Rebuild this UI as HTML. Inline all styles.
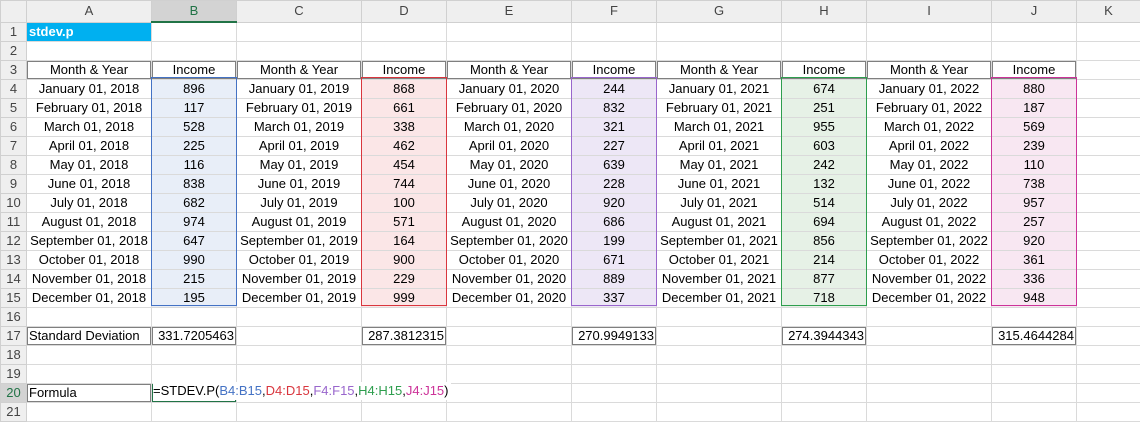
<!DOCTYPE html><html><head><style>
body{margin:0;width:1140px;height:421px;overflow:hidden;background:#fff;font-family:"Liberation Sans",Arial,sans-serif;font-size:13px;color:#000;position:relative}
table{border-collapse:collapse;table-layout:fixed;position:absolute;left:0;top:0;width:1140px}
td{height:18px;padding:0 2px;border:1px solid #dadada;white-space:nowrap;overflow:hidden;text-align:center;line-height:18px}
tr.h td{height:20px;background:#efefef;color:#444;border-color:#d0d0d0;font-size:13px}
td.n{background:#efefef;color:#444;border-color:#d0d0d0;text-align:center;padding:0}
td.t{box-shadow:inset 0 0 0 1px #7f7f7f}
td.l{text-align:left}
td.r{text-align:right}
.b{background:#e8eef8}.d{background:#fbe6e7}.f{background:#ede7f6}.hh{background:#e6f1e6}.j{background:#f8e7f2}
.box{position:absolute;box-sizing:border-box;border:1px solid}
</style></head><body>
<table>
<colgroup><col style="width:26px"><col style="width:125px"><col style="width:85px"><col style="width:125px"><col style="width:85px"><col style="width:125px"><col style="width:85px"><col style="width:125px"><col style="width:85px"><col style="width:125px"><col style="width:85px"><col style="width:64px"></colgroup>
<tr class="h"><td></td><td>A</td><td style="background:#d3d3d3;color:#217346;border-bottom:2px solid #217346">B</td><td>C</td><td>D</td><td>E</td><td>F</td><td>G</td><td>H</td><td>I</td><td>J</td><td>K</td></tr>
<tr><td class="n">1</td><td class="l" style="background:#00b0f0;color:#fff;font-weight:bold">stdev.p</td><td></td><td></td><td></td><td></td><td></td><td></td><td></td><td></td><td></td><td></td></tr>
<tr><td class="n">2</td><td></td><td></td><td></td><td></td><td></td><td></td><td></td><td></td><td></td><td></td><td></td></tr>
<tr><td class="n">3</td><td class="t">Month &amp; Year</td><td class="t">Income</td><td class="t">Month &amp; Year</td><td class="t">Income</td><td class="t">Month &amp; Year</td><td class="t">Income</td><td class="t">Month &amp; Year</td><td class="t">Income</td><td class="t">Month &amp; Year</td><td class="t">Income</td><td></td></tr>
<tr><td class="n">4</td><td>January 01, 2018</td><td class="b">896</td><td>January 01, 2019</td><td class="d">868</td><td>January 01, 2020</td><td class="f">244</td><td>January 01, 2021</td><td class="hh">674</td><td>January 01, 2022</td><td class="j">880</td><td></td></tr>
<tr><td class="n">5</td><td>February 01, 2018</td><td class="b">117</td><td>February 01, 2019</td><td class="d">661</td><td>February 01, 2020</td><td class="f">832</td><td>February 01, 2021</td><td class="hh">251</td><td>February 01, 2022</td><td class="j">187</td><td></td></tr>
<tr><td class="n">6</td><td>March 01, 2018</td><td class="b">528</td><td>March 01, 2019</td><td class="d">338</td><td>March 01, 2020</td><td class="f">321</td><td>March 01, 2021</td><td class="hh">955</td><td>March 01, 2022</td><td class="j">569</td><td></td></tr>
<tr><td class="n">7</td><td>April 01, 2018</td><td class="b">225</td><td>April 01, 2019</td><td class="d">462</td><td>April 01, 2020</td><td class="f">227</td><td>April 01, 2021</td><td class="hh">603</td><td>April 01, 2022</td><td class="j">239</td><td></td></tr>
<tr><td class="n">8</td><td>May 01, 2018</td><td class="b">116</td><td>May 01, 2019</td><td class="d">454</td><td>May 01, 2020</td><td class="f">639</td><td>May 01, 2021</td><td class="hh">242</td><td>May 01, 2022</td><td class="j">110</td><td></td></tr>
<tr><td class="n">9</td><td>June 01, 2018</td><td class="b">838</td><td>June 01, 2019</td><td class="d">744</td><td>June 01, 2020</td><td class="f">228</td><td>June 01, 2021</td><td class="hh">132</td><td>June 01, 2022</td><td class="j">738</td><td></td></tr>
<tr><td class="n">10</td><td>July 01, 2018</td><td class="b">682</td><td>July 01, 2019</td><td class="d">100</td><td>July 01, 2020</td><td class="f">920</td><td>July 01, 2021</td><td class="hh">514</td><td>July 01, 2022</td><td class="j">957</td><td></td></tr>
<tr><td class="n">11</td><td>August 01, 2018</td><td class="b">974</td><td>August 01, 2019</td><td class="d">571</td><td>August 01, 2020</td><td class="f">686</td><td>August 01, 2021</td><td class="hh">694</td><td>August 01, 2022</td><td class="j">257</td><td></td></tr>
<tr><td class="n">12</td><td>September 01, 2018</td><td class="b">647</td><td>September 01, 2019</td><td class="d">164</td><td>September 01, 2020</td><td class="f">199</td><td>September 01, 2021</td><td class="hh">856</td><td>September 01, 2022</td><td class="j">920</td><td></td></tr>
<tr><td class="n">13</td><td>October 01, 2018</td><td class="b">990</td><td>October 01, 2019</td><td class="d">900</td><td>October 01, 2020</td><td class="f">671</td><td>October 01, 2021</td><td class="hh">214</td><td>October 01, 2022</td><td class="j">361</td><td></td></tr>
<tr><td class="n">14</td><td>November 01, 2018</td><td class="b">215</td><td>November 01, 2019</td><td class="d">229</td><td>November 01, 2020</td><td class="f">889</td><td>November 01, 2021</td><td class="hh">877</td><td>November 01, 2022</td><td class="j">336</td><td></td></tr>
<tr><td class="n">15</td><td>December 01, 2018</td><td class="b">195</td><td>December 01, 2019</td><td class="d">999</td><td>December 01, 2020</td><td class="f">337</td><td>December 01, 2021</td><td class="hh">718</td><td>December 01, 2022</td><td class="j">948</td><td></td></tr>
<tr><td class="n">16</td><td></td><td></td><td></td><td></td><td></td><td></td><td></td><td></td><td></td><td></td><td></td></tr>
<tr><td class="n">17</td><td class="t l">Standard Deviation</td><td class="t r">331.7205463</td><td></td><td class="t r">287.3812315</td><td></td><td class="t r">270.9949133</td><td></td><td class="t r">274.3944343</td><td></td><td class="t r">315.4644284</td><td></td></tr>
<tr><td class="n">18</td><td></td><td></td><td></td><td></td><td></td><td></td><td></td><td></td><td></td><td></td><td></td></tr>
<tr><td class="n">19</td><td></td><td></td><td></td><td></td><td></td><td></td><td></td><td></td><td></td><td></td><td></td></tr>
<tr><td class="n" style="background:#d3d3d3;color:#217346">20</td><td class="t l">Formula</td><td style="box-shadow:inset 0 0 0 1px #217346"></td><td></td><td></td><td></td><td></td><td></td><td></td><td></td><td></td><td></td></tr>
<tr><td class="n">21</td><td></td><td></td><td></td><td></td><td></td><td></td><td></td><td></td><td></td><td></td><td></td></tr>
</table>
<div style="position:absolute;left:153px;top:382px;line-height:18px;white-space:nowrap;background:#fff;padding-right:2px">=STDEV.P(<span style="color:#4472c4">B4:B15</span>,<span style="color:#d9363e">D4:D15</span>,<span style="color:#9966cc">F4:F15</span>,<span style="color:#2e9e4e">H4:H15</span>,<span style="color:#cc3399">J4:J15</span>)</div>
<div class="box" style="left:151px;top:77px;width:86px;height:229px;border-color:#4472c4"></div>
<div class="box" style="left:361px;top:77px;width:86px;height:229px;border-color:#d9363e"></div>
<div class="box" style="left:571px;top:77px;width:86px;height:229px;border-color:#9966cc"></div>
<div class="box" style="left:781px;top:77px;width:86px;height:229px;border-color:#2e9e4e"></div>
<div class="box" style="left:991px;top:77px;width:86px;height:229px;border-color:#cc3399"></div>
</body></html>
